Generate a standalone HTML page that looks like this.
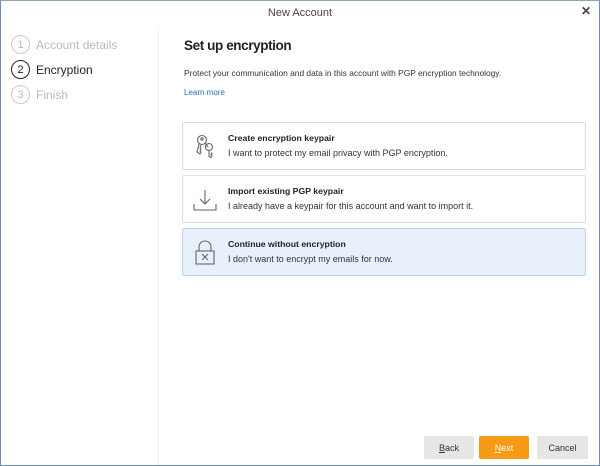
<!DOCTYPE html>
<html><head><style>
*{margin:0;padding:0;box-sizing:border-box}
body{width:600px;height:466px;overflow:hidden;background:#fff;font-family:"Liberation Sans",sans-serif;position:relative}
.win{position:absolute;left:0;top:0;width:600px;height:466px;border:1px solid #6d8aa8;border-top-color:#8aa3bd;background:#fff}
.title{position:absolute;top:6px;left:0;width:598px;text-align:center;font-size:11px;color:#444}
.close{position:absolute;left:580px;top:3px;font-size:12px;font-weight:bold;color:#444}
.side{position:absolute;left:157px;top:26px;width:1px;height:438px;background:#eee}
.step{position:absolute;left:10px;font-size:12px;display:flex;align-items:center}
.step .c{width:19px;height:19px;border:1.5px solid #ccc;border-radius:50%;font-size:11px;display:flex;align-items:center;justify-content:center;margin-right:6px;color:#bbb}
.h{position:absolute;left:183px;top:37px;font-size:13.5px;color:#222;font-weight:bold;letter-spacing:-.4px}
.p{position:absolute;left:183px;top:67px;font-size:8.4px;color:#333}
.lm{position:absolute;left:183px;top:87px;font-size:8px;color:#1a73c7}
.card{position:absolute;left:181px;width:404px;height:48px;border:1px solid #ddd;border-radius:2px;background:#fff}
.card.sel{background:#e8f1fb;border-color:#bcd3ec}
.card b{position:absolute;left:45px;top:10px;font-size:8.7px;color:#222}
.card span{position:absolute;left:45px;top:25px;font-size:9px;color:#333}
.card svg{position:absolute;left:9px;top:10px}
.btn{position:absolute;top:435px;height:23px;border-radius:2px;background:#e6e6e6;font-size:9px;color:#333;display:flex;align-items:center;justify-content:center}
</style></head><body>
<div class="win">
<div class="title">New Account</div>
<div class="close">✕</div>
<div class="side"></div>
<div class="step" style="top:34px;color:#bbb"><div class="c">1</div>Account details</div>
<div class="step" style="top:59px;color:#222"><div class="c" style="border-color:#222;color:#222">2</div>Encryption</div>
<div class="step" style="top:84px;color:#bbb"><div class="c">3</div>Finish</div>
<div class="h">Set up encryption</div>
<div class="p">Protect your communication and data in this account with PGP encryption technology.</div>
<div class="lm">Learn more</div>
<div class="card" style="top:121px"><svg width="26" height="28" viewBox="0 0 26 28" fill="none" stroke="#666" stroke-width="1.1"><circle cx="10" cy="7" r="4.5"/><circle cx="10" cy="6" r="1.2"/><path d="M7 11l-2 8 3 2 1-2-1-1 1-2-1-1 1-3M13 10l3 4"/><circle cx="17" cy="14" r="3.5"/><path d="M17 17.5v6l2 1 1-2-1-1 1-1-1-1"/></svg><b>Create encryption keypair</b><span>I want to protect my email privacy with PGP encryption.</span></div>
<div class="card" style="top:174px"><svg width="26" height="28" viewBox="0 0 26 28" fill="none" stroke="#666" stroke-width="1.1"><path d="M13 4v14M8 13l5 5 5-5M2 18v6h22v-6"/></svg><b>Import existing PGP keypair</b><span>I already have a keypair for this account and want to import it.</span></div>
<div class="card sel" style="top:227px"><svg width="26" height="28" viewBox="0 0 26 28" fill="none" stroke="#666" stroke-width="1.1"><path d="M7 12V8a6 6 0 0112 0v4"/><rect x="4" y="12" width="18" height="13"/><path d="M10 15l6 6M16 15l-6 6"/></svg><b>Continue without encryption</b><span>I don't want to encrypt my emails for now.</span></div>
<div class="btn" style="left:423px;width:50px"><u>B</u>ack</div>
<div class="btn" style="left:478px;width:50px;background:#f79a16;color:#fff"><u>N</u>ext</div>
<div class="btn" style="left:536px;width:51px">Cancel</div>
</div>
</body></html>
